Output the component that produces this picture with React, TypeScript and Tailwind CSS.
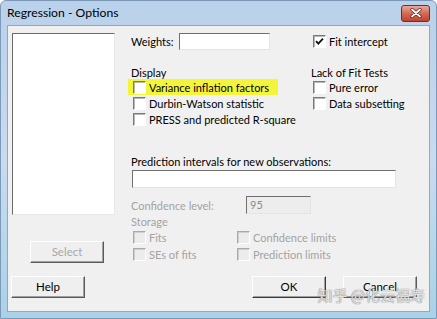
import React from 'react'

const FONT = { fontFamily: 'Lato, "Noto Sans", "Noto Sans CJK SC", sans-serif' }

function Check({ checked = false, disabled = false }: { checked?: boolean; disabled?: boolean }) {
  return (
    <span
      className={`relative inline-block w-[13px] h-[13px] shrink-0 border ${
        disabled
          ? 'border-t-[#a8a8a8] border-l-[#a8a8a8] border-b-white border-r-white bg-[#ececec] shadow-[inset_1px_1px_0_#cfcfcf]'
          : 'border-t-[#7a7a7a] border-l-[#7a7a7a] border-b-white border-r-white bg-white shadow-[inset_1px_1px_0_#b8b8b8]'
      }`}
    >
      {checked && (
        <svg viewBox="0 0 11 11" className="absolute inset-0 w-[11px] h-[11px]">
          <path d="M2 5.2 L4.3 7.6 L9 2.6" stroke="#111" strokeWidth="1.8" fill="none" />
        </svg>
      )}
    </span>
  )
}

function CheckRow({ label, checked, disabled }: { label: string; checked?: boolean; disabled?: boolean }) {
  return (
    <div className="flex items-center h-[16px] pl-[2px] gap-[3px]">
      <Check checked={checked} disabled={disabled} />
      <span className={`text-[11px] leading-none whitespace-nowrap ${disabled ? 'text-[#a3a3a3]' : 'text-black'}`}>
        {label}
      </span>
    </div>
  )
}

function Field({ w, h, value, disabled }: { w: string; h: string; value?: string; disabled?: boolean }) {
  return (
    <div
      className={`${w} ${h} border border-t-[#6f6f6f] border-l-[#6f6f6f] border-b-[#e4e4e4] border-r-[#e4e4e4] ${
        disabled ? 'bg-[#ededed]' : 'bg-white'
      } flex items-center pl-[3px] text-[11px] text-[#8a8a8a]`}
    >
      {value}
    </div>
  )
}

function Button({ label, disabled, isDefault, className = '' }: { label: string; disabled?: boolean; isDefault?: boolean; className?: string }) {
  return (
    <div
      className={`w-[74px] h-[22px] flex items-center justify-center bg-[#efefef] border border-t-white border-l-white ${
        isDefault ? 'border-b-[#3a3a3a] border-r-[#3a3a3a]' : 'border-b-[#5a5a5a] border-r-[#5a5a5a]'
      } shadow-[inset_-1px_-1px_0_#a0a0a0] text-[11.5px] ${disabled ? 'text-[#a8a8a8]' : 'text-black'} ${className}`}
    >
      {label}
    </div>
  )
}

export default function App() {
  return (
    <div className="w-[437px] h-[319px] overflow-hidden" style={FONT}>
      <div className="w-[437px] h-[319px] flex flex-col border border-[#7d99b8] rounded-t-[6px] bg-gradient-to-b from-[#b9d1ea] via-[#c9dbef] to-[#a9d2e6]">
        {/* title bar */}
        <div className="h-[24px] flex items-center justify-between pl-[6px] pr-[6px]">
          <span className="text-[12.2px] text-black leading-none">Regression - Options</span>
          <div className="w-[29px] h-[17px] rounded-[3px] border border-[#7a2a22] bg-gradient-to-b from-[#e9a89b] via-[#d26a55] to-[#c0432c] flex items-center justify-center">
            <svg viewBox="0 0 12 10" className="w-[12px] h-[10px]">
              <path d="M2 1.5 L10 8.5 M10 1.5 L2 8.5" stroke="#5a1d16" strokeWidth="3.2" strokeLinecap="round" />
              <path d="M2 1.5 L10 8.5 M10 1.5 L2 8.5" stroke="#ffffff" strokeWidth="1.8" strokeLinecap="round" />
            </svg>
          </div>
        </div>

        {/* client area */}
        <div className="relative flex-1 mx-[6px] mb-[6px] bg-[#f0f0f0] border border-[#8fa8c4] flex flex-col">
          <div className="flex mt-[7px]">
            {/* left column */}
            <div className="flex flex-col ml-[4px] w-[103px]">
              <div className="h-[182px] bg-white border border-t-[#6a6a6a] border-l-[#6a6a6a] border-b-[#e8e8e8] border-r-[#e8e8e8]" />
              <Button label="Select" disabled className="mt-[26px] ml-[18px] w-[73px]" />
            </div>

            {/* right column */}
            <div className="flex flex-col ml-[16px] text-[11px] text-black">
              <div className="flex items-center h-[17px]">
                <span className="w-[48px] leading-none">Weights:</span>
                <Field w="w-[91px]" h="h-[17px]" />
                <div className="ml-[41px]">
                  <CheckRow label="Fit intercept" checked />
                </div>
              </div>

              <div className="flex mt-[15px]">
                <div className="w-[180px] flex flex-col">
                  <div className="h-[14px] flex items-center leading-none">Display</div>
                  <div className="-ml-[3px] w-[150px] pl-[3px] bg-[#f4f53a]">
                    <CheckRow label="Variance inflation factors" />
                  </div>
                  <CheckRow label="Durbin-Watson statistic" />
                  <CheckRow label="PRESS and predicted R-square" />
                </div>
                <div className="flex flex-col">
                  <div className="h-[14px] flex items-center leading-none">Lack of Fit Tests</div>
                  <CheckRow label="Pure error" />
                  <CheckRow label="Data subsetting" />
                </div>
              </div>

              <div className="mt-[27px] h-[14px] flex items-center leading-none">Prediction intervals for new observations:</div>
              <div className="mt-[2px] ml-[1px]">
                <Field w="w-[264px]" h="h-[18px]" />
              </div>

              <div className="mt-[8px] flex items-center h-[18px]">
                <span className="w-[115px] leading-none text-[#a3a3a3]">Confidence level:</span>
                <Field w="w-[65px]" h="h-[18px]" value="95" disabled />
              </div>
              <div className="h-[14px] flex items-center leading-none text-[#a3a3a3]">Storage</div>
              <div className="grid grid-cols-[104px_auto] mt-[1px] gap-y-[1px]">
                <CheckRow label="Fits" disabled />
                <CheckRow label="Confidence limits" disabled />
                <CheckRow label="SEs of fits" disabled />
                <CheckRow label="Prediction limits" disabled />
              </div>
            </div>
          </div>

          {/* bottom buttons */}
          <div className="flex mt-[13px]">
            <Button label="Help" className="ml-[3px]" />
            <Button label="OK" isDefault className="ml-[167px]" />
            <Button label="Cancel" className="ml-[17px]" />
          </div>

          <span
            className="absolute right-[4px] bottom-[9px] text-[15px] leading-none text-white/75 [text-shadow:0_0_1px_#808080,0_0_1px_#808080]"
            style={{ fontFamily: '"Noto Sans CJK SC", sans-serif' }}
          >
            知乎 @化云福寿
          </span>
        </div>
      </div>
    </div>
  )
}
